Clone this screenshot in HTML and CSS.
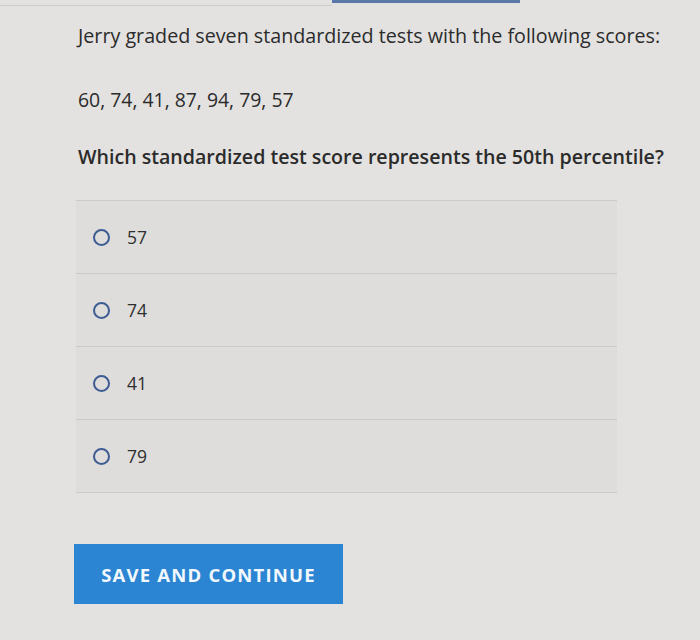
FILE: index.html
```html
<!DOCTYPE html>
<html lang="en">
<head>
    <meta charset="UTF-8">
    <title>Question</title>
    <link rel="stylesheet" href="styles.css">
</head>
<body>
    <div class="topbar"><div class="progress"></div></div>
    <div class="container">
        <p class="prompt">Jerry graded seven standardized tests with the following scores:</p>
        <p class="scores">60, 74, 41, 87, 94, 79, 57</p>
        <p class="question">Which standardized test score represents the 50th percentile?</p>
        <div class="choices">
            <label class="choice"><span class="radio"></span><span class="value">57</span></label>
            <label class="choice"><span class="radio"></span><span class="value">74</span></label>
            <label class="choice"><span class="radio"></span><span class="value">41</span></label>
            <label class="choice"><span class="radio"></span><span class="value">79</span></label>
        </div>
        <button class="save">SAVE AND CONTINUE</button>
    </div>
</body>
</html>
```

FILE: styles.css
```css
body { margin: 0; padding: 0; background: #e3e2e0; font-family: "Open Sans", Arial, sans-serif; color: #2b2b2b; height: 640px; overflow: hidden; }
.topbar { height: 5px; position: relative; border-bottom: 1px solid #cfcdcb; width: 332px; }
.progress { position: absolute; left: 332px; top: 0; width: 188px; height: 3px; background: #5a78a8; }
.container { padding: 0 0 0 78px; }
.prompt { margin: 17px 0 0; font-size: 19.7px; line-height: 26px; }
.scores { margin: 38px 0 0; font-size: 19.4px; line-height: 26px; }
.question { margin: 31px 0 0; font-size: 19.6px; line-height: 26px; font-weight: 600; }
.choices { margin: 30px 0 0 -2px; width: 541px; border-top: 1px solid #cbcac8; }
.choice { display: flex; align-items: center; border-bottom: 1px solid #cbcac8; background: #dedddb; padding-left: 17px; box-sizing: border-box; height: 73px; }
.radio { width: 13px; height: 13px; border: 2.5px solid #3d5c94; border-radius: 50%; }
.value { margin-left: 17px; font-size: 17.5px; color: #2e2e2e; }
.save { margin: 51px 0 0 -4px; width: 269px; height: 60px; border: none; background: #2b85d2; color: #f2f8fd; font-family: "Open Sans", Arial, sans-serif; font-weight: 700; font-size: 18.5px; letter-spacing: 1.2px; }
```
